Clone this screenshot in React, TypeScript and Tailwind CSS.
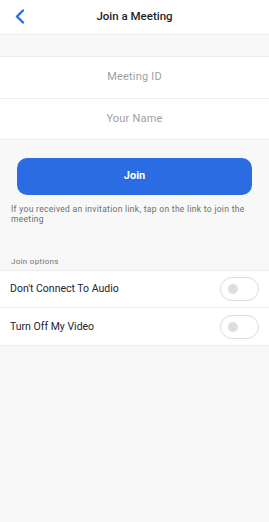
import React from 'react';

const Toggle: React.FC = () => (
  <div className="w-[39px] h-[24px] rounded-full border border-[#dcdcdc] bg-white flex items-center px-[7px]">
    <div className="w-[10px] h-[10px] rounded-full bg-[#dedede]" />
  </div>
);

const OptionRow: React.FC<{ label: string; last?: boolean }> = ({ label, last }) => (
  <div className={`h-[37px] flex items-center justify-between pl-[10px] pr-[10px] bg-white ${last ? '' : 'border-b border-[#ececec]'}`}>
    <span className="text-[10.5px] text-[#232333]">{label}</span>
    <Toggle />
  </div>
);

export default function App() {
  return (
    <div className="w-[269px] h-[522px] bg-[#f8f8f8] flex flex-col" style={{ fontFamily: 'Roboto, "Liberation Sans", sans-serif' }}>
      {/* Header */}
      <div className="h-[35px] shrink-0 bg-white flex items-center relative border-b border-[#efefef]">
        <svg className="absolute left-[14px] top-[9px]" width="12" height="15" viewBox="0 0 12 15" fill="none">
          <path d="M9 1.5 L3 7.5 L9 13.5" stroke="#2d6ae3" strokeWidth="2.4" strokeLinecap="round" strokeLinejoin="round" />
        </svg>
        <span className="w-full text-center text-[11.5px] font-medium text-[#1f1f1f]">Join a Meeting</span>
      </div>

      <div className="h-[21px] shrink-0" />

      {/* Inputs */}
      <div className="bg-white border-t border-[#ececec]">
        <div className="h-[42px] flex items-center justify-center border-b border-[#ececec]">
          <span className="text-[11px] text-[#a0a0a0] tracking-[0.2px]">Meeting ID</span>
        </div>
        <div className="h-[41px] flex items-center justify-center border-b border-[#ececec]">
          <span className="text-[11px] text-[#a0a0a0] tracking-[0.2px]">Your Name</span>
        </div>
      </div>

      {/* Join button */}
      <button className="mt-[18px] mx-[17px] h-[37px] shrink-0 rounded-[10px] bg-[#2c6ce3] flex items-center justify-center">
        <span className="text-white text-[11px] font-bold">Join</span>
      </button>

      <p className="mt-[9px] px-[11px] text-[8.5px] leading-[10px] text-[#6e6e6e] tracking-[0.3px]">
        If you received an invitation link, tap on the link to join the meeting
      </p>

      <div className="mt-[32px] px-[11px] h-[14px] text-[8px] tracking-[0.3px] text-[#707070]">Join options</div>

      {/* Options */}
      <div className="border-t border-[#ececec] border-b">
        <OptionRow label="Don't Connect To Audio" />
        <OptionRow label="Turn Off My Video" last />
      </div>
    </div>
  );
}
